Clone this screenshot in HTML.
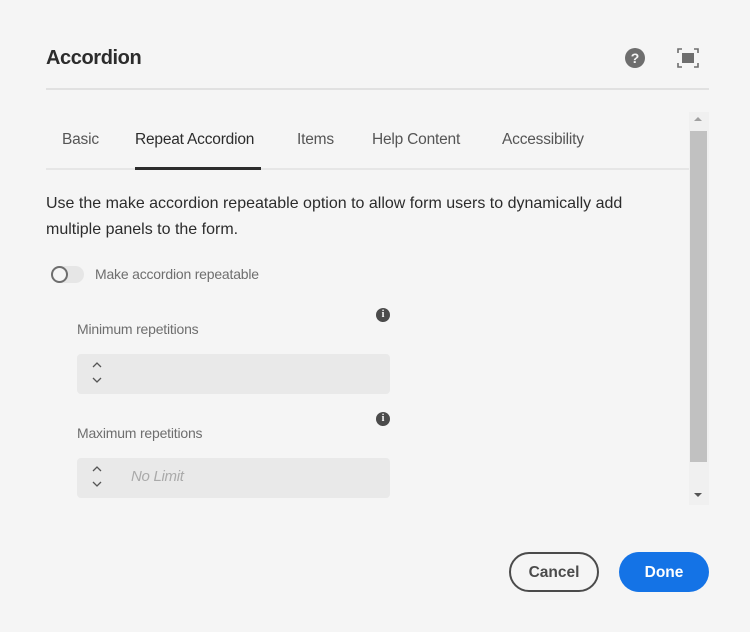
<!DOCTYPE html>
<html><head><style>
*{margin:0;padding:0;box-sizing:border-box}
body{width:750px;height:632px;background:#f5f5f5;font-family:"Liberation Sans",sans-serif;position:relative;overflow:hidden;color:#2c2c2c}
.a{position:absolute;white-space:nowrap}
.tab{position:absolute;top:131px;font-size:15.5px;color:#555;letter-spacing:-0.2px}
.lbl{font-size:14px;color:#6e6e6e;letter-spacing:-0.2px}
.field{position:absolute;left:77px;width:313px;height:40px;background:#e9e9e9;border-radius:4px}
.info{position:absolute;width:14px;height:14px;border-radius:50%;background:#4b4b4b;color:#fff;font:bold 10px "Liberation Serif",serif;text-align:center;line-height:14px}
</style></head><body>
<div class="a" style="left:46px;top:47px;font-size:20px;font-weight:bold;letter-spacing:-0.4px;color:#2c2c2c">Accordion</div>
<div class="a" style="left:625px;top:48px;width:20px;height:20px;border-radius:50%;background:#6e6e6e;color:#f5f5f5;font-weight:bold;font-size:14px;text-align:center;line-height:20px">?</div>
<svg class="a" style="left:677px;top:48px" width="22" height="20" viewBox="0 0 22 20"><path d="M1 5V1H5M17 1H21V5M21 15V19H17M5 19H1V15" fill="none" stroke="#6e6e6e" stroke-width="1.6"/><rect x="5" y="5" width="12" height="10" fill="#6e6e6e"/></svg>
<div class="a" style="left:46px;top:88px;width:663px;height:2px;background:#e1e1e1"></div>

<div class="a" style="left:689px;top:112px;width:20px;height:393px;background:#f0f0f0"></div>
<div class="a" style="left:690px;top:131px;width:17px;height:331px;background:#c1c1c1"></div>
<svg class="a" style="left:694px;top:116px" width="8" height="6"><path d="M0 5L4 1L8 5Z" fill="#a0a0a0"/></svg>
<svg class="a" style="left:694px;top:492px" width="8" height="6"><path d="M0 1L4 5L8 1Z" fill="#555"/></svg>

<div class="tab" style="left:62px">Basic</div>
<div class="tab" style="left:135px;color:#2c2c2c">Repeat Accordion</div>
<div class="tab" style="left:297px">Items</div>
<div class="tab" style="left:372px">Help Content</div>
<div class="tab" style="left:502px">Accessibility</div>
<div class="a" style="left:46px;top:168px;width:643px;height:2px;background:#e6e6e6"></div>
<div class="a" style="left:135px;top:167px;width:126px;height:3px;background:#2c2c2c"></div>

<div class="a" style="left:46px;top:191px;font-size:16px;line-height:26px;letter-spacing:0px;color:#2c2c2c">Use the make accordion repeatable option to allow form users to dynamically add<br>multiple panels to the form.</div>

<div class="a" style="left:51px;top:266px;width:33px;height:17px;border-radius:9px;background:#e6e6e6"></div>
<div class="a" style="left:51px;top:266px;width:17px;height:17px;border-radius:50%;border:2px solid #6e6e6e;background:#f5f5f5"></div>
<div class="a lbl" style="left:95px;top:266px">Make accordion repeatable</div>

<div class="info" style="left:376px;top:308px">i</div>
<div class="a lbl" style="left:77px;top:321px">Minimum repetitions</div>
<div class="field" style="top:354px"></div>
<svg class="a" style="left:92px;top:361px" width="10" height="24"><path d="M1 6L5 2L9 6M1 17L5 21L9 17" fill="none" stroke="#555" stroke-width="1.3"/></svg>

<div class="info" style="left:376px;top:412px">i</div>
<div class="a lbl" style="left:77px;top:425px">Maximum repetitions</div>
<div class="field" style="top:458px"></div>
<svg class="a" style="left:92px;top:465px" width="10" height="24"><path d="M1 6L5 2L9 6M1 17L5 21L9 17" fill="none" stroke="#555" stroke-width="1.3"/></svg>
<div class="a" style="left:131px;top:468px;font-size:15px;font-style:italic;color:#aaa;letter-spacing:-0.3px">No Limit</div>

<div class="a" style="left:509px;top:552px;width:90px;height:40px;border:2px solid #4b4b4b;border-radius:20px;text-align:center;line-height:37px;font-size:15.5px;font-weight:bold;color:#4b4b4b">Cancel</div>
<div class="a" style="left:619px;top:552px;width:90px;height:40px;background:#1473e6;border-radius:20px;text-align:center;line-height:41px;font-size:15.5px;font-weight:bold;color:#fff">Done</div>
</body></html>
